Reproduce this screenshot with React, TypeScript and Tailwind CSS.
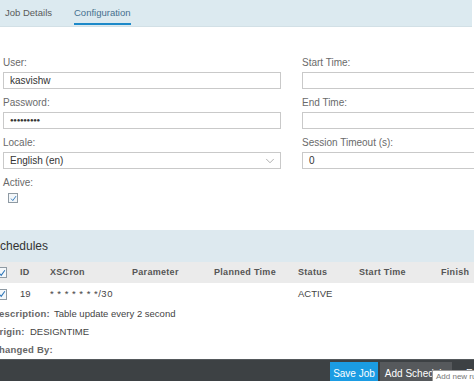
import { ChevronDown } from 'lucide-react';

function Check({ size = 10 }: { size?: number }) {
  return (
    <span
      className="flex items-center justify-center border border-[#8f9aa3] bg-[#f3f7fa] shrink-0"
      style={{ width: size, height: size }}
    >
      <svg width={size - 3} height={size - 3} viewBox="0 0 10 10">
        <path d="M1.5 5.2 L4 8 L8.6 1.6" fill="none" stroke="#2b74b8" strokeWidth="1.3" />
      </svg>
    </span>
  );
}

function Field({ label, value, select, dots }: { label: string; value?: string; select?: boolean; dots?: boolean }) {
  return (
    <div className="mb-[8px]">
      <div className="h-[12px] leading-[12px] text-[10px] text-[#6a6a6a] mb-[3px]">{label}</div>
      <div className="h-[17px] border border-[#c9c9c9] bg-white flex items-center pl-[6px] pr-[3px] text-[10px] text-[#333]">
        <span className={dots ? 'flex-1 text-[6px] tracking-[-0.3px]' : 'flex-1'}>{value}</span>
        {select && <ChevronDown size={14} strokeWidth={1} className="text-[#777]" />}
      </div>
    </div>
  );
}

const cols = ['ID', 'XSCron', 'Parameter', 'Planned Time', 'Status', 'Start Time', 'Finish'];

export default function App() {
  return (
    <div className="w-[474px] h-[381px] overflow-hidden bg-white font-['Liberation_Sans',Arial,sans-serif] flex flex-col">
      {/* tabs */}
      <div className="w-[472px] h-[27px] shrink-0 bg-[#dceaf0] border-b border-[#d2e0e6] flex items-stretch pl-[5px] gap-[22px] text-[9.5px]">
        <div className="flex items-center text-[#5a5a5a]">Job Details</div>
        <div className="flex items-center relative text-[#46708f]">
          Configuration
          <span className="absolute left-0 right-0 bottom-[1px] h-[2.5px] bg-[#1c89c9]" />
        </div>
      </div>

      {/* form */}
      <div className="pt-[30px] pl-[3px] grid grid-cols-[278px_280px] gap-x-[21px] shrink-0">
        <div>
          <Field label="User:" value="kasvishw" />
          <Field label="Password:" value="●●●●●●●●●" dots />
          <Field label="Locale:" value="English (en)" select />
          <div className="h-[12px] leading-[12px] text-[10px] text-[#6a6a6a] mb-[4px]">Active:</div>
          <div className="pl-[5px]">
            <Check />
          </div>
        </div>
        <div>
          <Field label="Start Time:" />
          <Field label="End Time:" />
          <Field label="Session Timeout (s):" value="0" />
        </div>
      </div>

      {/* schedules */}
      <div className="mt-[27px] ml-[-8px] w-[482px] flex flex-col flex-1">
        <div className="h-[32px] bg-[#dde9ef] flex items-center text-[12px] text-[#333] shrink-0">Schedules</div>
        <div className="h-[21px] bg-[#ebebeb] grid grid-cols-[28px_30px_82px_82px_84px_61px_82px_40px] items-center text-[9px] font-bold tracking-[0.3px] text-[#555] shrink-0">
          <div className="pl-[4px]">
            <Check size={11} />
          </div>
          {cols.map(c => (
            <div key={c} className="whitespace-nowrap">{c}</div>
          ))}
        </div>
        <div className="h-[22px] grid grid-cols-[28px_30px_82px_82px_84px_61px_82px_40px] items-center text-[9.5px] text-[#444] shrink-0">
          <div className="pl-[4px]">
            <Check size={11} />
          </div>
          <div>19</div>
          <div className="tracking-[0.5px]">* * * * * * */30</div>
          <div />
          <div />
          <div>ACTIVE</div>
          <div />
          <div />
        </div>
        <div className="flex flex-col text-[9.5px] text-[#444]">
          <div className="h-[18px] flex items-center">
            <span className="w-[62px] font-bold text-[#666] tracking-[0.2px]">Description:</span>
            <span>Table update every 2 second</span>
          </div>
          <div className="h-[18px] flex items-center">
            <span className="w-[38px] font-bold text-[#666] tracking-[0.2px]">Origin:</span>
            <span>DESIGNTIME</span>
          </div>
          <div className="h-[18px] flex items-center">
            <span className="font-bold text-[#666] tracking-[0.2px]">Changed By:</span>
          </div>
        </div>
      </div>

      {/* footer */}
      <div className="h-[22px] shrink-0 bg-[#3d4144] border-t border-[#55595c] relative flex items-start pt-[2px] pl-[330px] gap-[2px] text-[10px] text-white overflow-hidden">
        <div className="h-[22px] w-[48px] shrink-0 bg-[#1b9ce3] flex items-center justify-center">Save Job</div>
        <div className="h-[22px] w-[72px] shrink-0 bg-[#56595c] flex items-center justify-center whitespace-nowrap">Add Schedule</div>
        <div className="h-[22px] w-[40px] shrink-0 flex items-center pl-[12px]">Edit</div>
        <div className="absolute left-[432px] top-[10px] h-[14px] w-[60px] bg-white border border-[#999] text-[8px] text-[#777] pl-[3px] leading-[11px] whitespace-nowrap">
          Add new rule
        </div>
      </div>
    </div>
  );
}
